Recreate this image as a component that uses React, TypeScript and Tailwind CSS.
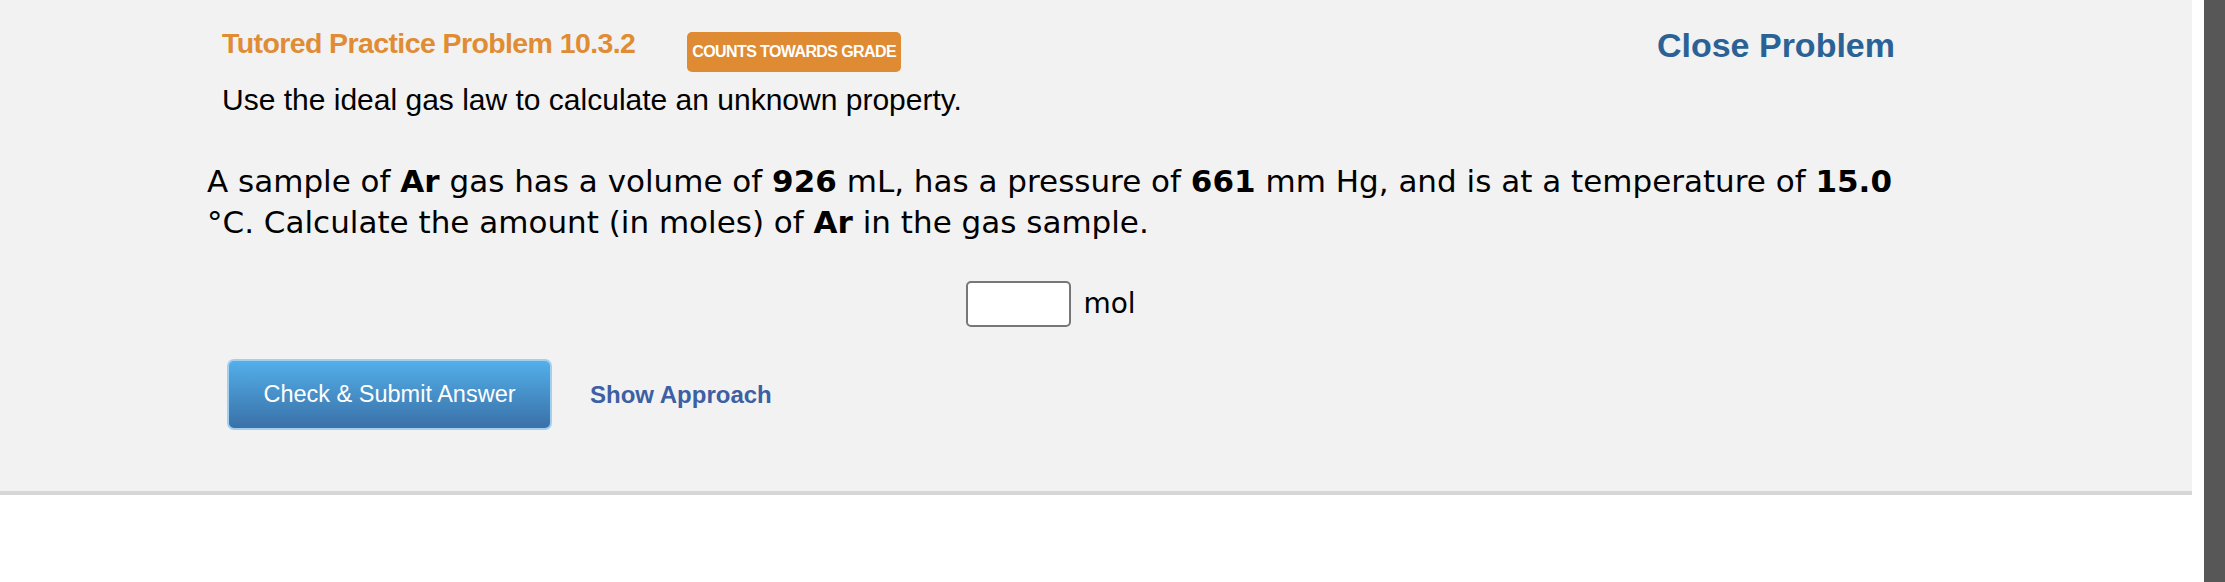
import React from "react";

export default function App() {
  return (
    <div className="flex h-[582px] w-[2225px] bg-white overflow-hidden">
      <div className="w-[2192px] flex flex-col">
        <div className="bg-[#f2f2f2] border-b-4 border-[#d7d7d7] h-[495px]">
          <div className="ml-[207px] w-[1720px] pt-[25px]">
            <div className="flex items-start pl-[15px] pr-[32px]">
              <div
                className="text-[28.5px] leading-[36px] font-bold tracking-[-0.6px] text-[#e08c34]"
                style={{ fontFamily: '"Liberation Sans", Arial, sans-serif' }}
              >
                Tutored Practice Problem 10.3.2
              </div>
              <div
                className="ml-[52px] mt-[7px] h-[40px] px-[5px] flex items-center rounded-[5px] bg-[#df8b33] text-white text-[16px] font-bold tracking-[-0.6px]"
                style={{ fontFamily: '"Liberation Sans", Arial, sans-serif' }}
              >
                COUNTS TOWARDS GRADE
              </div>
              <div
                className="ml-auto text-[34px] leading-[40px] font-bold text-[#2b6296]"
                style={{ fontFamily: '"Liberation Sans", Arial, sans-serif' }}
              >
                Close Problem
              </div>
            </div>
            <div
              className="pl-[15px] mt-[10px] text-[30px] leading-[36px] text-black"
              style={{ fontFamily: '"Liberation Sans", Arial, sans-serif' }}
            >
              Use the ideal gas law to calculate an unknown property.
            </div>
            <p
              className="mt-[43px] text-[31px] leading-[41px] text-black"
              style={{ fontFamily: '"DejaVu Sans", Verdana, sans-serif' }}
            >
              A sample of <b>Ar</b> gas has a volume of <b>926</b> mL, has a pressure of <b>661</b> mm Hg, and is at a
              temperature of <b>15.0</b> °C. Calculate the amount (in moles) of <b>Ar</b> in the gas sample.
            </p>
            <div className="mt-[38px] w-[1688px] flex items-center justify-center">
              <div className="w-[105px] h-[46px] bg-white border-2 border-[#777777] rounded-[5px]" />
              <span
                className="ml-[12px] text-[28px] leading-[32px] text-black"
                style={{ fontFamily: '"DejaVu Sans", Verdana, sans-serif' }}
              >
                mol
              </span>
            </div>
            <div className="mt-[32px] ml-[20px] flex items-center">
              <div
                className="w-[325px] h-[71px] rounded-[7px] border-2 border-[#a3d0f0] bg-gradient-to-b from-[#53afea] to-[#3a71a8] flex items-center justify-center text-white text-[23.5px]"
                style={{ fontFamily: '"Liberation Sans", Arial, sans-serif' }}
              >
                Check &amp; Submit Answer
              </div>
              <div
                className="ml-[38px] text-[24px] font-bold text-[#3d5fa3]"
                style={{ fontFamily: '"Liberation Sans", Arial, sans-serif' }}
              >
                Show Approach
              </div>
            </div>
          </div>
        </div>
      </div>
      <div className="w-[12px] bg-white" />
      <div className="w-[21px] bg-[#575757]" />
    </div>
  );
}
